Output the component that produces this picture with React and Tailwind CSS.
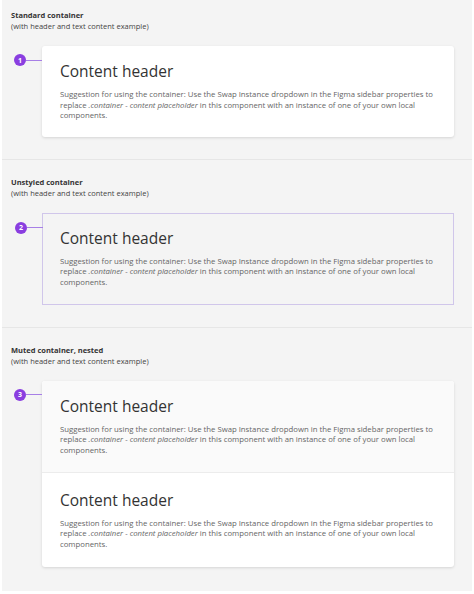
import React from 'react';

const BODY_FONT = { fontFamily: '"Open Sans", "Noto Sans", Arial, sans-serif' };

const Badge = ({ n }) => (
  <div className="absolute left-[-28px] top-[8px] flex items-center">
    <div className="w-[12px] h-[12px] rounded-full bg-[#8a3ee0] text-white text-[7px] font-bold leading-none flex items-center justify-center">{n}</div>
    <div className="w-[16px] h-px bg-[#a77fe6]" />
  </div>
);

const Content = () => (
  <div className="pt-[15px] pb-[16px] px-[18px]">
    <div className="text-[15.5px] leading-[20px] text-[#333]">Content header</div>
    <p className="mt-[8px] text-[7.75px] leading-[10.5px] text-[#666] whitespace-nowrap">
      Suggestion for using the container: Use the Swap Instance dropdown in the Figma sidebar properties to
      <br />
      replace <i>.container - content placeholder</i> in this component with an instance of one of your own local
      <br />
      components.
    </p>
  </div>
);

const Section = ({ title, first, children, last }) => (
  <section className={`px-[9px] ${first ? 'pt-[10px]' : 'pt-[17px] border-t border-[#e6e6e6]'} ${last ? 'pb-[24px]' : 'pb-[22px]'}`}>
    <div className="text-[7.5px] leading-[11px] text-[#333] font-bold">{title}</div>
    <div className="text-[7.5px] leading-[11px] text-[#444]">(with header and text content example)</div>
    <div className="mt-[14px] pl-[31px] pr-[9px]">{children}</div>
  </section>
);

export default function App() {
  return (
    <div className="w-[474px] h-[594px] bg-white overflow-hidden" style={BODY_FONT}>
      <div className="mx-[2px] bg-[#f4f4f4]">
        <Section title="Standard container" first>
          <div className="relative bg-white rounded-[3px] shadow-[0_1px_3px_rgba(0,0,0,0.13)]">
            <Badge n="1" />
            <Content />
          </div>
        </Section>
        <Section title="Unstyled container">
          <div className="relative border border-[#d0c6ea] h-[92px]">
            <Badge n="2" />
            <div className="-mt-px -ml-px">
              <Content />
            </div>
          </div>
        </Section>
        <Section title="Muted container, nested" last>
          <div className="relative rounded-[3px] bg-white shadow-[0_1px_3px_rgba(0,0,0,0.13)]">
            <Badge n="3" />
            <div className="bg-[#fafafa] rounded-t-[3px] border-b border-[#ececec] h-[92px]">
              <Content />
            </div>
            <div className="h-[94px] pt-[2px]">
              <Content />
            </div>
          </div>
        </Section>
      </div>
    </div>
  );
}
